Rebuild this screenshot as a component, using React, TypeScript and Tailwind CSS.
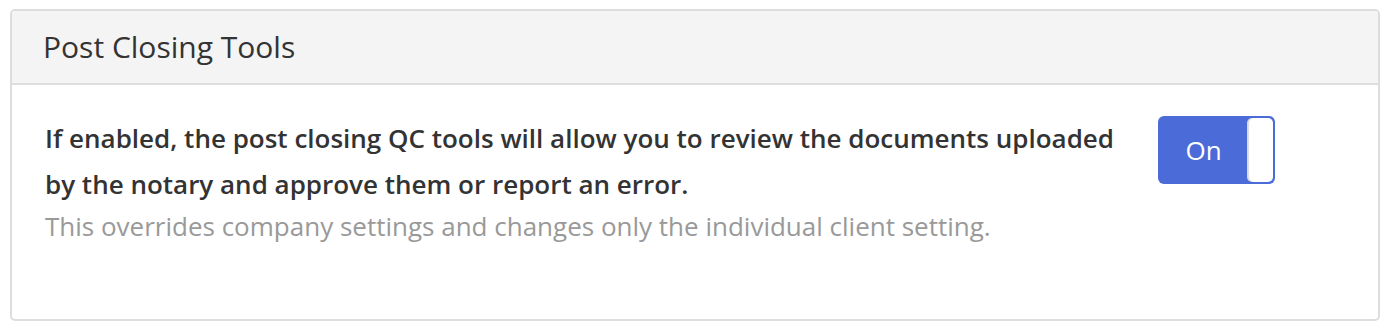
import { useState } from 'react';

export default function App() {
  const [enabled, setEnabled] = useState(true);

  return (
    <div className="min-h-[334px] bg-white px-[10px] pt-[9px]" style={{ fontFamily: '"Open Sans", "Liberation Sans", sans-serif' }}>
      <section className="h-[312px] overflow-hidden rounded-[5px] border-2 border-[#dddddd] bg-white">
        <header className="flex h-[74px] items-center border-b-2 border-[#dddddd] bg-[#f4f4f4] px-[31px]">
          <h2 className="-mt-[2px] text-[30px] font-normal text-[#333333]">Post Closing Tools</h2>
        </header>

        <div className="flex items-start justify-between pl-[33px] pr-[103px] pt-[30px]">
          <div className="w-[1090px]">
            <p className="text-[26px] font-semibold leading-[46px] text-[#333333]">
              If enabled, the post closing QC tools will allow you to review the documents uploaded by the notary and approve them or report an error.
            </p>
            <p className="text-[26px] leading-[38px] text-[#999999]">
              This overrides company settings and changes only the individual client setting.
            </p>
          </div>

          <button
            type="button"
            onClick={() => setEnabled((v) => !v)}
            className="mt-[1px] flex h-[68px] w-[117px] items-stretch rounded-[6px] bg-[#4a6bd8] p-[2px]"
          >
            <span className="flex flex-1 items-center justify-center text-[26px] text-white">{enabled ? 'On' : 'Off'}</span>
            <span className="w-[26px] rounded-[5px] bg-white shadow-[inset_2px_0_1px_rgba(0,0,0,0.15)]" />
          </button>
        </div>
      </section>
    </div>
  );
}
